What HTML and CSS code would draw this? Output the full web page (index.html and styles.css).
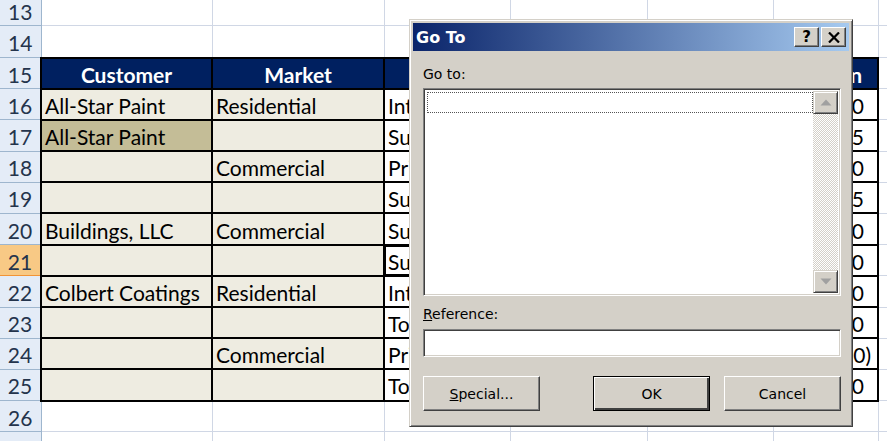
FILE: index.html
```html
<!DOCTYPE html>
<html lang="en">

<head>
    <meta charset="UTF-8">
    <title>Go To</title>
    <link rel="stylesheet" href="styles.css">
</head>

<body>

    <table class="sheet">
        <colgroup>
            <col class="c-hdr"><col class="c-a"><col class="c-b"><col class="c-c">
            <col class="c-d"><col class="c-e"><col class="c-f"><col class="c-g">
        </colgroup>
        <tr class="r-top">
            <th>13</th><td></td><td></td><td></td><td></td><td></td><td></td><td></td>
        </tr>
        <tr class="r-14">
            <th>14</th><td></td><td></td><td></td><td></td><td></td><td></td><td></td>
        </tr>
        <tr class="r">
            <th>15</th>
            <td class="head">Customer</td>
            <td class="head">Market</td>
            <td class="head">Product</td>
            <td class="head">Units</td>
            <td class="head">Price</td>
            <td class="head right">Margin</td>
            <td></td>
        </tr>
        <tr class="r">
            <th>16</th>
            <td class="cell">All-Star Paint</td><td class="cell">Residential</td>
            <td class="data">Interior</td><td class="data"></td><td class="data"></td>
            <td class="data num">1,250</td><td></td>
        </tr>
        <tr class="r">
            <th>17</th>
            <td class="cell pick">All-Star Paint</td><td class="cell"></td>
            <td class="data">Supplies</td><td class="data"></td><td class="data"></td>
            <td class="data num">325</td><td></td>
        </tr>
        <tr class="r">
            <th>18</th>
            <td class="cell"></td><td class="cell">Commercial</td>
            <td class="data">Primer</td><td class="data"></td><td class="data"></td>
            <td class="data num">2,400</td><td></td>
        </tr>
        <tr class="r">
            <th>19</th>
            <td class="cell"></td><td class="cell"></td>
            <td class="data">Supplies</td><td class="data"></td><td class="data"></td>
            <td class="data num">185</td><td></td>
        </tr>
        <tr class="r">
            <th>20</th>
            <td class="cell">Buildings, LLC</td><td class="cell">Commercial</td>
            <td class="data">Supplies</td><td class="data"></td><td class="data"></td>
            <td class="data num">900</td><td></td>
        </tr>
        <tr class="r">
            <th class="hot">21</th>
            <td class="cell"></td><td class="cell"></td>
            <td class="data active">Supplies</td><td class="data"></td><td class="data"></td>
            <td class="data num">1,100</td><td></td>
        </tr>
        <tr class="r">
            <th>22</th>
            <td class="cell">Colbert Coatings</td><td class="cell">Residential</td>
            <td class="data">Interior</td><td class="data"></td><td class="data"></td>
            <td class="data num">3,000</td><td></td>
        </tr>
        <tr class="r">
            <th>23</th>
            <td class="cell"></td><td class="cell"></td>
            <td class="data">Total</td><td class="data"></td><td class="data"></td>
            <td class="data num">9,160</td><td></td>
        </tr>
        <tr class="r">
            <th>24</th>
            <td class="cell"></td><td class="cell">Commercial</td>
            <td class="data">Primer</td><td class="data"></td><td class="data"></td>
            <td class="data num"><span class="neg">(200)</span></td><td></td>
        </tr>
        <tr class="r">
            <th>25</th>
            <td class="cell"></td><td class="cell"></td>
            <td class="data">Total</td><td class="data"></td><td class="data"></td>
            <td class="data num">8,960</td><td></td>
        </tr>
        <tr class="r-26">
            <th>26</th><td></td><td></td><td></td><td></td><td></td><td></td><td></td>
        </tr>
        <tr class="r-26">
            <th></th><td></td><td></td><td></td><td></td><td></td><td></td><td></td>
        </tr>
    </table>

    <!-- dialog lies over the sheet -->
    <div class="dialog">
        <div class="titlebar">
            <span class="title">Go To</span>
            <span class="tbtn q">?</span>
            <span class="tbtn">
                <svg width="12" height="11" viewBox="0 0 12 11">
                    <path d="M1 0.5 L11 10.5 M11 0.5 L1 10.5" stroke="#000" stroke-width="2.2" fill="none"/>
                </svg>
            </span>
        </div>
        <div class="dlg-body">
            <div class="label">Go to:</div>
            <div class="listbox">
                <div class="items">
                    <div class="focus"></div>
                </div>
                <div class="vscroll">
                    <div class="arrow">
                        <svg width="12" height="7" viewBox="0 0 12 7">
                            <path d="M6 0.5 L11.5 6.5 L0.5 6.5 Z" fill="#a0a0a0"/>
                        </svg>
                    </div>
                    <div class="track"></div>
                    <div class="arrow">
                        <svg width="12" height="7" viewBox="0 0 12 7">
                            <path d="M0.5 0.5 L11.5 0.5 L6 6.5 Z" fill="#a0a0a0"/>
                        </svg>
                    </div>
                </div>
            </div>
            <div class="label ref"><span class="key">R</span>eference:</div>
            <div class="textbox"></div>
            <div class="buttons">
                <div class="btn"><span class="key">S</span>pecial...</div>
                <div class="btn-group">
                    <div class="btn default">OK</div>
                    <div class="btn">Cancel</div>
                </div>
            </div>
        </div>
    </div>

</body>

</html>
```

FILE: styles.css
```css
body {
    margin: 0;
    background-color: #fff;
    overflow: hidden;
    width: 887px;
    height: 441px;
    position: relative;
}

/* ---------- spreadsheet ---------- */

.sheet {
    border-collapse: collapse;
    table-layout: fixed;
    width: 978px;
    margin-top: -6px;
    font-family: Lato, "Liberation Sans", sans-serif;
    font-size: 21px;
    color: #000;
}

.c-hdr { width: 41px; }
.c-a { width: 171px; }
.c-b { width: 172px; }
.c-c { width: 126px; }
.c-d { width: 137px; }
.c-e { width: 126px; }
.c-f { width: 105px; }
.c-g { width: 100px; }

.r-top { height: 31px; }
.r-14 { height: 32px; }
.r { height: 31.2px; }
.r-26 { height: 31px; }

.sheet td {
    border: 1px solid #d0d7e5;
    padding: 2px 3px 0 3px;
    white-space: nowrap;
    overflow: hidden;
    vertical-align: middle;
}

.sheet th {
    background-color: #e4ecf7;
    border: 1px solid #9eb6ce;
    border-left: none;
    font-weight: normal;
    color: #24344c;
    padding: 2px 0 0 0;
    text-align: center;
}

.sheet th.hot {
    background-color: #f8c985;
    border-color: #f29436;
}

.sheet td.head {
    background-color: #002060;
    color: #fff;
    font-weight: bold;
    text-align: center;
    border: 2px solid #000;
}

.sheet td.head.right {
    text-align: right;
    padding-right: 15px;
}

.sheet td.cell {
    background-color: #eeece1;
    border: 2px solid #000;
}

.sheet td.pick {
    background-color: #c4bd97;
}

.sheet td.data {
    background-color: #fff;
    border: 2px solid #000;
}

.sheet td.num {
    text-align: right;
    padding-right: 13px;
}

.neg {
    margin-right: -7px;
}

.sheet td.active {
    box-shadow: inset 0 0 0 1px #000;
}

/* ---------- Go To dialog ---------- */

.dialog {
    position: absolute;
    left: 409px;
    top: 19px;
    width: 444px;
    height: 408px;
    box-sizing: border-box;
    background-color: #d4d0c8;
    border: 1px solid;
    border-color: #d4d0c8 #404040 #404040 #d4d0c8;
    box-shadow: inset 1px 1px 0 #fff, inset -1px -1px 0 #808080;
    padding: 3px;
    font-family: "DejaVu Sans", Tahoma, sans-serif;
    font-size: 14px;
    color: #000;
}

.titlebar {
    height: 28px;
    display: flex;
    align-items: center;
    gap: 2px;
    padding: 0 3px 0 3px;
    background-image: linear-gradient(to right, #0a246a, #a6caf0);
}

.title {
    flex: 1;
    color: #fff;
    font-weight: bold;
    font-size: 16px;
}

.tbtn {
    width: 25px;
    height: 20px;
    box-sizing: border-box;
    background-color: #d4d0c8;
    border: 1px solid;
    border-color: #fff #404040 #404040 #fff;
    box-shadow: inset -1px -1px 0 #808080;
    display: flex;
    align-items: center;
    justify-content: center;
    font-weight: bold;
    font-size: 15px;
    line-height: 1;
}

.dlg-body {
    padding: 15px 8px 0 10px;
}

.label {
    line-height: 17px;
    height: 17px;
}

.label.ref {
    margin-top: 10px;
}

.key {
    text-decoration: underline;
}

.listbox {
    margin-top: 5px;
    height: 208px;
    box-sizing: border-box;
    background-color: #fff;
    border: 1px solid;
    border-color: #808080 #fff #fff #808080;
    box-shadow: inset 1px 1px 0 #404040, inset -1px -1px 0 #d4d0c8;
    padding: 2px;
    display: flex;
}

.items {
    flex: 1;
    padding: 1px 0 0 1px;
}

.focus {
    height: 19px;
    border: 1px dotted #555;
}

.vscroll {
    width: 25px;
    display: flex;
    flex-direction: column;
}

.arrow {
    height: 23px;
    box-sizing: border-box;
    background-color: #d4d0c8;
    border: 1px solid;
    border-color: #d4d0c8 #404040 #404040 #d4d0c8;
    box-shadow: inset 1px 1px 0 #fff, inset -1px -1px 0 #808080;
    display: flex;
    align-items: center;
    justify-content: center;
}

.track {
    flex: 1;
    background-color: #eceae6;
    background-image: repeating-conic-gradient(#fff 0 25%, #d4d0c8 0 50%);
    background-size: 2px 2px;
}

.textbox {
    margin-top: 6px;
    height: 28px;
    box-sizing: border-box;
    background-color: #fff;
    border: 1px solid;
    border-color: #808080 #fff #fff #808080;
    box-shadow: inset 1px 1px 0 #404040, inset -1px -1px 0 #d4d0c8;
}

.buttons {
    margin-top: 19px;
    display: flex;
    justify-content: space-between;
}

.btn-group {
    display: flex;
    gap: 14px;
}

.btn {
    width: 117px;
    height: 35px;
    box-sizing: border-box;
    border: 1px solid;
    border-color: #fff #404040 #404040 #fff;
    box-shadow: inset -1px -1px 0 #808080;
    display: flex;
    align-items: center;
    justify-content: center;
}

.btn.default {
    border: 1px solid #000;
    box-shadow: inset 1px 1px 0 #fff, inset -2px -2px 0 #404040;
}
```
